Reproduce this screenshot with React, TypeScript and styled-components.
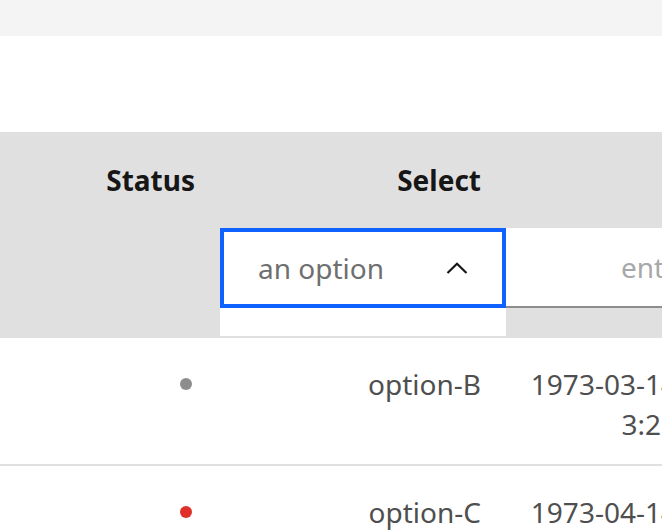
import React from "react";
import styled, { createGlobalStyle } from "styled-components";

const GlobalStyle = createGlobalStyle`
  html, body {
    margin: 0;
    padding: 0;
    background: #ffffff;
    overflow: hidden;
  }
  body {
    font-family: "Noto Sans", "Open Sans", Arial, sans-serif;
    color: #161616;
  }
  * { box-sizing: border-box; }
`;

const Page = styled.div`
  width: 662px;
  height: 532px;
  overflow: hidden;
  display: flex;
  flex-direction: column;
`;

const TopBar = styled.div`
  height: 36px;
  flex: none;
  background: #f4f4f4;
`;

const Spacer = styled.div`
  height: 96px;
  flex: none;
  background: #ffffff;
`;

const Table = styled.div`
  width: 706px;
  display: flex;
  flex-direction: column;
`;

const Grid = styled.div`
  display: grid;
  grid-template-columns: 220px 286px 200px;
`;

const HeaderGroup = styled.div`
  background: #e0e0e0;
  border-bottom: 2px solid #e0e0e0;
`;

const TitleCell = styled.div`
  height: 96px;
  display: flex;
  align-items: center;
  justify-content: flex-end;
  padding-right: 25px;
  font-size: 28px;
  line-height: 40px;
  font-weight: 700;
  color: #161616;
`;

const FilterCell = styled.div`
  height: 108px;
  display: flex;
  flex-direction: column;
`;

const SelectBox = styled.div`
  height: 80px;
  flex: none;
  background: #ffffff;
  border: 4px solid #0f62fe;
  display: flex;
  align-items: center;
  justify-content: space-between;
  padding: 0 34px;
  font-size: 28px;
  color: #6f6f6f;
`;

const MenuStrip = styled.div`
  height: 28px;
  flex: none;
  background: #ffffff;
`;

const FilterInput = styled.div`
  height: 80px;
  flex: none;
  background: #ffffff;
  border-bottom: 2px solid #8d8d8d;
  display: flex;
  align-items: center;
  padding-left: 115px;
  font-size: 28px;
  color: #a8a8a8;
  white-space: nowrap;
  overflow: hidden;
`;

const Row = styled(Grid)`
  height: 128px;
  border-bottom: 2px solid #e0e0e0;
`;

const Cell = styled.div<{ $padRight?: number }>`
  padding: 26px ${(p) => p.$padRight ?? 25}px 0 0;
  display: flex;
  flex-direction: column;
  align-items: flex-end;
  font-size: 28px;
  line-height: 40px;
  color: #4f4f4f;
  white-space: nowrap;
`;

const DotLine = styled.div`
  height: 40px;
  display: flex;
  align-items: center;
`;

const Dot = styled.span<{ $color: string }>`
  width: 12px;
  height: 12px;
  margin-right: 3px;
  border-radius: 50%;
  background: ${(p) => p.$color};
`;

const Chevron = () => (
  <svg width="22" height="12" viewBox="0 0 22 12" fill="none">
    <polyline points="1.5,11 11,1.8 20.5,11" stroke="#161616" strokeWidth="2.2" />
  </svg>
);

const rows = [
  { status: "#8d8d8d", option: "option-B", date: "1973-03-14", time: "3:21" },
  { status: "#e0302a", option: "option-C", date: "1973-04-14", time: "7:08" },
];

export default function App() {
  return (
    <>
      <GlobalStyle />
      <Page>
        <TopBar />
        <Spacer />
        <Table>
          <HeaderGroup>
            <Grid>
              <TitleCell>Status</TitleCell>
              <TitleCell>Select</TitleCell>
              <TitleCell />
            </Grid>
            <Grid>
              <FilterCell />
              <FilterCell>
                <SelectBox>
                  <span>an option</span>
                  <Chevron />
                </SelectBox>
                <MenuStrip />
              </FilterCell>
              <FilterCell>
                <FilterInput>enter text</FilterInput>
              </FilterCell>
            </Grid>
          </HeaderGroup>
          {rows.map((r) => (
            <Row key={r.option}>
              <Cell>
                <DotLine>
                  <Dot $color={r.status} />
                </DotLine>
              </Cell>
              <Cell>{r.option}</Cell>
              <Cell $padRight={29}>
                <span>{r.date}</span>
                <span>{r.time}</span>
              </Cell>
            </Row>
          ))}
        </Table>
      </Page>
    </>
  );
}
